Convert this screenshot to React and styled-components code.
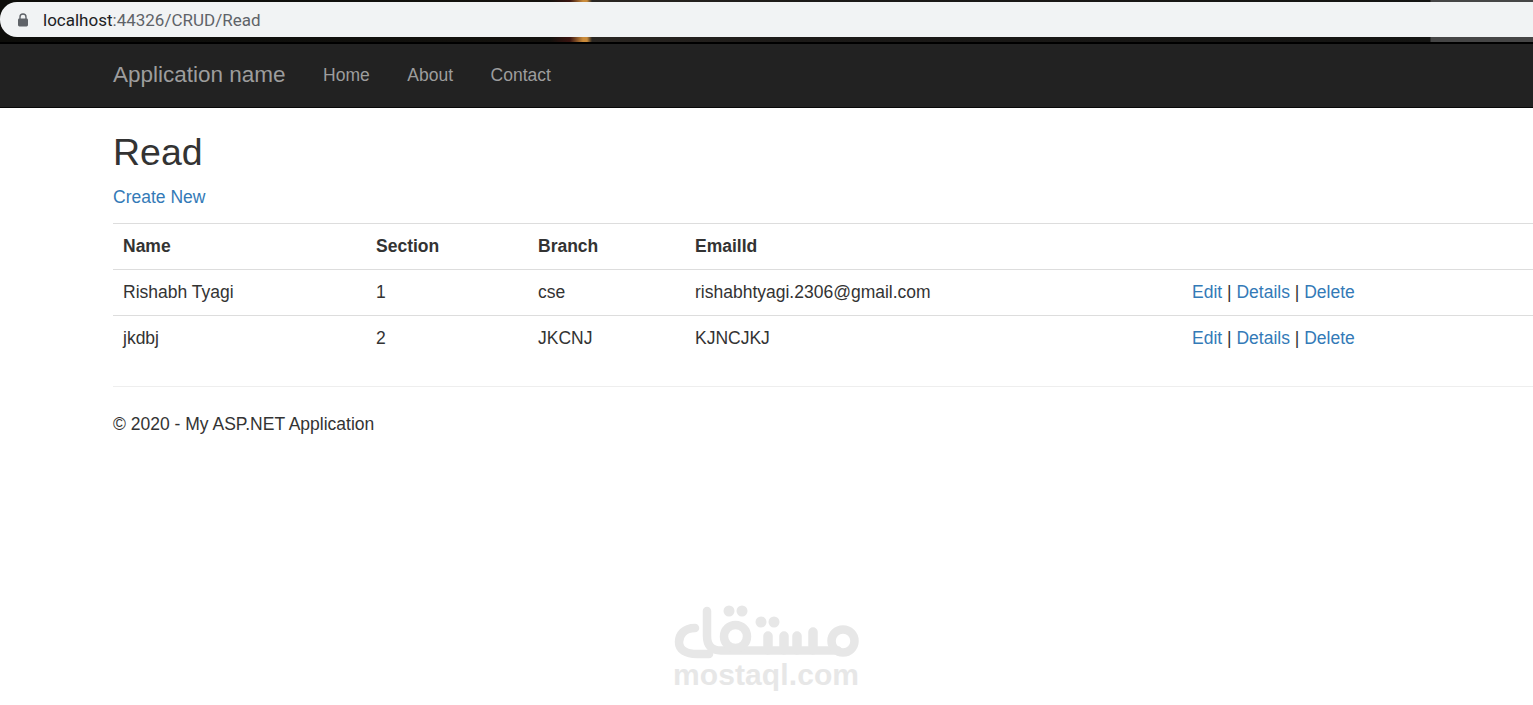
import React from "react";
import styled, { createGlobalStyle } from "styled-components";

const Global = createGlobalStyle`
  html, body { margin: 0; padding: 0; background: #fff; overflow: hidden; }
  body { font-family: "Liberation Sans", Arial, sans-serif; font-size: 17.5px; line-height: 1.43; color: #333; }
`;

const Page = styled.div`
  position: relative;
  width: 1533px;
  height: 705px;
  overflow: hidden;
`;

const BrowserStrip = styled.div`
  height: 42px;
  box-sizing: border-box;
  padding-top: 2px;
  background: linear-gradient(90deg, #0d0d0a 0, #0f0f0c 250px, #14120e 550px, #3a1410 570px, #c98a3a 583px, #c98a3a 587px, #2a2622 592px, #1c1a18 800px, #141412 1430px, #464646 1431px, #464646 100%);
`;

const AddressBar = styled.div`
  height: 35px;
  box-sizing: border-box;
  padding: 1px 0 0 17px;
  background: #f1f3f4;
  border-radius: 17px 0 0 17px;
  display: flex;
  align-items: center;
  gap: 14px;
  font-family: Roboto, "Noto Sans", sans-serif;
  font-size: 17px;
  color: #5f6368;
`;

const Host = styled.span`
  color: #202124;
`;

const Navbar = styled.nav`
  height: 66px;
  box-sizing: border-box;
  background: #222;
  border-top: 2px solid #000;
  border-bottom: 1px solid #080808;
  display: flex;
  align-items: center;
  padding-left: 113px;
`;

const Brand = styled.a`
  font-size: 22.5px;
  color: #9d9d9d;
  margin-right: 37.5px;
`;

const NavLink = styled.a`
  font-size: 17.5px;
  color: #9d9d9d;
  margin-right: 37.5px;
`;

const Main = styled.main`
  padding-left: 113px;
`;

const Title = styled.h2`
  margin: 0;
  padding-top: 24px;
  font-size: 37.5px;
  font-weight: 500;
  line-height: 41px;
  color: #333;
`;

const Action = styled.a`
  color: #337ab7;
`;

const CreateRow = styled.p`
  margin: 12px 0 13px;
  line-height: 25px;
`;

const Table = styled.table`
  width: 1420px;
  table-layout: fixed;
  border-collapse: collapse;
`;

const Head = styled.th`
  width: ${(p) => p.$w}px;
  height: 46px;
  box-sizing: border-box;
  padding: 0 10px;
  text-align: left;
  font-weight: 700;
  border-top: 1px solid #ddd;
  border-bottom: 1px solid #ddd;
`;

const Cell = styled.td`
  height: 46px;
  box-sizing: border-box;
  padding: 0 10px;
  border-bottom: ${(p) => (p.$last ? "none" : "1px solid #ddd")};
`;

const Rule = styled.hr`
  margin: 24px 0 0;
  border: 0;
  border-top: 1px solid #eee;
`;

const Footer = styled.footer`
  margin-top: 25px;
  line-height: 25px;
`;

const Watermark = styled.div`
  position: absolute;
  left: 673px;
  top: 604px;
  width: 186px;
  color: #e7e7e7;
`;

const LogoMark = styled.svg`
  display: block;
`;

const WatermarkText = styled.div`
  font-size: 30px;
  font-weight: 700;
  line-height: 30px;
  letter-spacing: 0.1px;
  white-space: nowrap;
`;

const Lock = () => (
  <svg width="12" height="14" viewBox="0 0 12 14" fill="#5f6368">
    <path d="M3 6V4a3 3 0 0 1 6 0v2" fill="none" stroke="#5f6368" strokeWidth="1.4" />
    <rect x="1" y="5.5" width="10" height="8" rx="1.4" />
  </svg>
);

const Logo = () => (
  <LogoMark width="186" height="56" viewBox="0 0 186 56" fill="none" stroke="currentColor" strokeWidth="8.5" strokeLinecap="round" strokeLinejoin="round">
    <path d="M22 24C11 24 6 31 6 38C6 46 13 50 24 50H36" />
    <path d="M34 7V32Q34 46.5 48 46.5H165" />
    <circle cx="62.5" cy="32.5" r="11.5" />
    <circle cx="170" cy="37" r="11.5" />
    <path d="M95 46V32M111 46V32M124 46V32M140 46V28" strokeWidth="9.5" />
    <g fill="currentColor" stroke="none">
      <circle cx="56" cy="7" r="5.5" />
      <circle cx="69" cy="7" r="5.5" />
      <circle cx="88" cy="18" r="5.5" />
      <circle cx="101" cy="18" r="5.5" />
    </g>
  </LogoMark>
);

const rows = [
  ["Rishabh Tyagi", "1", "cse", "rishabhtyagi.2306@gmail.com"],
  ["jkdbj", "2", "JKCNJ", "KJNCJKJ"],
];

export default function App() {
  return (
    <Page>
      <Global />
      <BrowserStrip>
        <AddressBar>
          <Lock />
          <span>
            <Host>localhost</Host>:44326/CRUD/Read
          </span>
        </AddressBar>
      </BrowserStrip>
      <Navbar>
        <Brand>Application name</Brand>
        <NavLink>Home</NavLink>
        <NavLink>About</NavLink>
        <NavLink>Contact</NavLink>
      </Navbar>
      <Main>
        <Title>Read</Title>
        <CreateRow>
          <Action>Create New</Action>
        </CreateRow>
        <Table>
          <thead>
            <tr>
              <Head $w={253}>Name</Head>
              <Head $w={162}>Section</Head>
              <Head $w={157}>Branch</Head>
              <Head $w={497}>EmailId</Head>
              <Head $w={351} />
            </tr>
          </thead>
          <tbody>
            {rows.map((r, i) => {
              const last = i === rows.length - 1;
              return (
                <tr key={r[0]}>
                  {r.map((v) => (
                    <Cell key={v} $last={last}>{v}</Cell>
                  ))}
                  <Cell $last={last}>
                    <Action>Edit</Action> | <Action>Details</Action> | <Action>Delete</Action>
                  </Cell>
                </tr>
              );
            })}
          </tbody>
        </Table>
        <Rule />
        <Footer>© 2020 - My ASP.NET Application</Footer>
      </Main>
      <Watermark>
        <Logo />
        <WatermarkText>mostaql.com</WatermarkText>
      </Watermark>
    </Page>
  );
}
